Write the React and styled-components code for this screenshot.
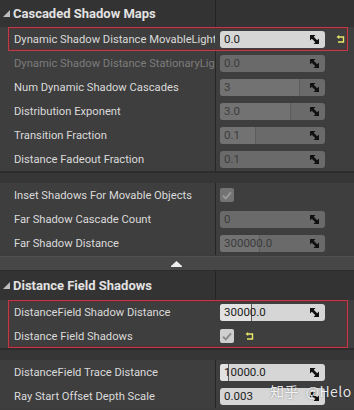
import React from 'react';
import styled, { createGlobalStyle } from 'styled-components';

const GlobalStyle = createGlobalStyle`
  body {
    margin: 0;
    background: #3c3c3c;
    font-family: Roboto, "Noto Sans", sans-serif;
  }
`;

const Panel = styled.div`
  position: relative;
  width: 354px;
  height: 410px;
  overflow: hidden;
  background: #3c3c3c;
`;

const Header = styled.div`
  display: grid;
  grid-template-columns: 216px 1fr;
  height: ${props => props.h || 27}px;
  background: #333333;
`;

const HeaderTitle = styled.div`
  display: flex;
  align-items: center;
  gap: 3px;
  padding-left: 3px;
  font-size: 13px;
  font-weight: 700;
  color: #e2e2e2;
  border-right: 1px solid #242424;
`;

const Row = styled.div`
  display: grid;
  grid-template-columns: 216px 1fr;
  height: 24px;
  background: #3e3e3e;
`;

const Label = styled.div`
  display: flex;
  align-items: center;
  padding-left: 14px;
  font-size: 11.2px;
  color: ${props => (props.dim ? '#7c7c7c' : '#dadada')};
  white-space: nowrap;
  overflow: hidden;
  border-right: 1px solid ${props => (props.noLine ? 'transparent' : '#262626')};
`;

const ValueCell = styled.div`
  display: flex;
  align-items: center;
  gap: 11px;
  padding-left: 4px;
`;

const NumBox = styled.div`
  position: relative;
  display: flex;
  align-items: center;
  width: 105px;
  height: 17px;
  border-radius: 3px;
  overflow: hidden;
  background: ${props => (props.active ? '#d6d6d6' : '#6a6a6a')};
  color: ${props => (props.active ? '#1c1c1c' : '#3c3c3c')};
  font-size: 11.5px;
`;

const Fill = styled.div`
  position: absolute;
  left: 0;
  top: 0;
  bottom: 0;
  background: ${props => (props.active ? '#e2e2e2' : '#727272')};
  border-right: 1px solid ${props => (props.active ? '#5a5a5a' : '#5c5c5c')};
`;

const NumText = styled.span`
  position: relative;
  padding-left: 4px;
  flex: 1;
`;

const Spin = styled.svg`
  position: relative;
  width: 9px;
  height: 9px;
  margin-right: 6px;
  flex: none;
`;

const Check = styled.div`
  display: flex;
  align-items: center;
  justify-content: center;
  width: 14px;
  height: 14px;
  border-radius: 2px;
  background: ${props => (props.active ? '#cfcfcf' : '#737373')};
`;

const Separator = styled.div`
  height: 10px;
  background: #363636;
  border-top: 2px solid #2c2c2c;
`;

const CollapseBar = styled.div`
  display: flex;
  justify-content: center;
  align-items: center;
  height: 13px;
  margin-top: 1px;
  background: #474747;
  border-top: 1px solid #505050;
  border-bottom: 1px solid #2c2c2c;
  padding-right: 2px;
`;

const Highlight = styled.div`
  position: relative;
  &::after {
    content: '';
    position: absolute;
    left: 8px;
    right: 6px;
    top: 0;
    bottom: 0;
    border: 1px solid #c03a48;
    box-shadow: inset 0 0 0 1px rgba(120, 30, 40, 0.5);
    pointer-events: none;
  }
`;

const Watermark = styled.div`
  position: absolute;
  left: 270px;
  top: 381px;
  font-family: "Noto Sans CJK SC", Roboto, sans-serif;
  font-size: 14px;
  color: rgba(255, 255, 255, 0.88);
  text-shadow: 0 0 2px rgba(0, 0, 0, 0.4);
  letter-spacing: 0.5px;
  word-spacing: 3px;
`;

const Triangle = () => (
  <svg width="7" height="7" viewBox="0 0 7 7">
    <path d="M7 0 L7 7 L0 7 Z" fill="#bdbdbd" />
  </svg>
);

const SpinIcon = () => (
  <Spin viewBox="0 0 9 9">
    <path d="M0 0 L5.5 0 L0 5.5 Z M9 9 L3.5 9 L9 3.5 Z" fill="#111" />
    <path d="M1.5 1.5 L7.5 7.5" stroke="#111" strokeWidth="2.6" />
  </Spin>
);

const ResetIcon = () => (
  <svg width="9" height="9" viewBox="0 0 9 9">
    <path d="M3 2 L7.5 2 L7.5 7 L2 7" fill="none" stroke="#e8e86a" strokeWidth="1.4" />
    <path d="M0.5 2 L3.2 0 L3.2 4 Z" fill="#e8e86a" />
  </svg>
);

const CheckMark = ({ color }) => (
  <svg width="10" height="9" viewBox="0 0 10 9">
    <path d="M1 4.8 L3.8 7.4 L9 1.4" fill="none" stroke={color} strokeWidth="2" />
  </svg>
);

const Number = ({ value, active, fill }) => (
  <NumBox active={active}>
    {fill != null && <Fill active={active} style={{ width: fill }} />}
    <NumText>{value}</NumText>
    <SpinIcon />
  </NumBox>
);

const Prop = ({ label, dim, noLine, children }) => (
  <Row>
    <Label dim={dim} noLine={noLine}>{label}</Label>
    <ValueCell>{children}</ValueCell>
  </Row>
);

const Category = ({ title, h }) => (
  <Header h={h}>
    <HeaderTitle>
      <Triangle />
      {title}
    </HeaderTitle>
    <div />
  </Header>
);

export default function App() {
  return (
    <>
      <GlobalStyle />
      <Panel>
        <Category title="Cascaded Shadow Maps" />
        <Highlight>
          <Prop label="Dynamic Shadow Distance MovableLight" noLine>
            <Number value="0.0" active />
            <ResetIcon />
          </Prop>
        </Highlight>
        <Prop label="Dynamic Shadow Distance StationaryLight" dim>
          <Number value="0.0" />
        </Prop>
        <Prop label="Num Dynamic Shadow Cascades">
          <Number value="3" fill={79} />
        </Prop>
        <Prop label="Distribution Exponent">
          <Number value="3.0" fill={70} />
        </Prop>
        <Prop label="Transition Fraction">
          <Number value="0.1" fill={35} />
        </Prop>
        <Prop label="Distance Fadeout Fraction">
          <Number value="0.1" />
        </Prop>
        <Separator />
        <Prop label="Inset Shadows For Movable Objects">
          <Check>
            <CheckMark color="#9a9a9a" />
          </Check>
        </Prop>
        <Prop label="Far Shadow Cascade Count">
          <Number value="0" />
        </Prop>
        <Prop label="Far Shadow Distance">
          <Number value="300000.0" fill={39} />
        </Prop>
        <CollapseBar>
          <svg width="11" height="6" viewBox="0 0 11 6">
            <path d="M5.5 0 L11 5 L0 5 Z" fill="#eeeeee" />
            <rect x="0" y="5" width="11" height="1" fill="#eeeeee" />
          </svg>
        </CollapseBar>
        <Category title="Distance Field Shadows" h={29} />
        <Highlight>
          <Prop label="DistanceField Shadow Distance" noLine>
            <Number value="30000.0" active fill={31} />
          </Prop>
          <Prop label="Distance Field Shadows" noLine>
            <Check active>
              <CheckMark color="#8a8a8a" />
            </Check>
            <ResetIcon />
          </Prop>
        </Highlight>
        <Separator />
        <Prop label="DistanceField Trace Distance">
          <Number value="10000.0" active fill={8} />
        </Prop>
        <Prop label="Ray Start Offset Depth Scale">
          <Number value="0.003" active />
        </Prop>
        <Watermark>知乎 @Helo</Watermark>
      </Panel>
    </>
  );
}
